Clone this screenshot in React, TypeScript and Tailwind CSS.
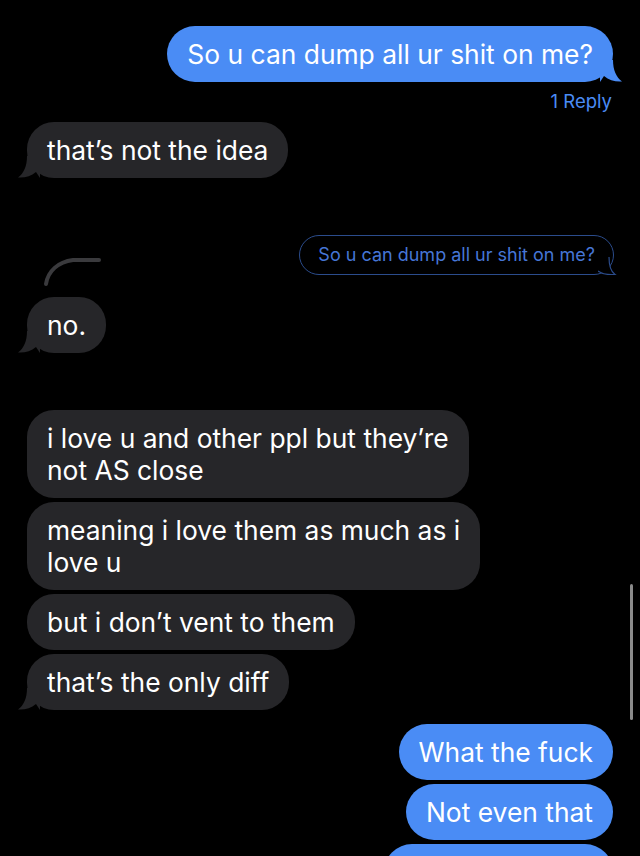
import React from 'react';

const font = { fontFamily: 'Inter, "Noto Sans", sans-serif' };

const LeftTail = () => (
  <svg className="absolute -left-[9px] bottom-0" width="22" height="22" viewBox="0 0 22 22">
    <path d="M9 0 C9 10 6 17 0 21.5 C7 22 13 20 18 16 L22 22 L22 0 Z" fill="#262629" />
  </svg>
);

const RightTail = ({ color, outline }: { color: string; outline?: boolean }) =>
  outline ? (
    <svg className="absolute -right-[7px] -bottom-[1px]" width="22" height="22" viewBox="0 0 22 22">
      <path d="M0 18 C4 21 10 22 17 21.5 C12 18 11 12 11 4" fill="black" stroke={color} strokeWidth="1.2" />
    </svg>
  ) : (
    <svg className="absolute -right-[9px] bottom-0" width="22" height="22" viewBox="0 0 22 22">
      <path d="M13 0 C13 10 16 17 22 21.5 C15 22 9 20 4 16 L0 22 L0 0 Z" fill={color} />
    </svg>
  );

const Gray = ({ children, tail, className = '' }: { children: React.ReactNode; tail?: boolean; className?: string }) => (
  <div className={`relative self-start whitespace-nowrap rounded-[27px] bg-[#262629] px-[20px] py-[12px] text-[26.4px] leading-[32px] text-white ${className}`}>
    {tail && <LeftTail />}
    <span className="relative">{children}</span>
  </div>
);

const Blue = ({ children, tail, className = '' }: { children: React.ReactNode; tail?: boolean; className?: string }) => (
  <div className={`relative self-end whitespace-nowrap rounded-[28px] bg-[#4a8cf5] px-[20px] py-[12px] text-[26.4px] leading-[32px] text-white ${className}`}>
    {tail && <RightTail color="#4a8cf5" />}
    <span className="relative">{children}</span>
  </div>
);

export default function App() {
  return (
    <div className="relative h-[856px] w-[640px] overflow-hidden bg-black" style={font}>
      <div className="flex flex-col px-[27px]">
        <Blue tail className="mt-[26px]">So u can dump all ur shit on me?</Blue>
        <div className="mt-[8px] mr-[1px] self-end text-[18.5px] leading-[22px] text-[#4a8cf5]">1 Reply</div>
        <Gray tail className="mt-[10px]">that’s not the idea</Gray>

        <div className="relative mt-[57px] flex flex-col">
          <div className="relative self-end mr-[-1px] rounded-[21px] border border-[#2b4c8c] px-[18px] py-[8px] text-[18px] leading-[22px] text-[#4676d6]">
            <RightTail color="#2b4c8c" outline />
            <span className="relative">So u can dump all ur shit on me?</span>
          </div>
          <svg className="absolute left-[16px] top-[20px]" width="60" height="32" viewBox="0 0 60 32">
            <path d="M3 29 C5 16 15 7 30 5 L56 5" fill="none" stroke="#3a3a3d" strokeWidth="4" strokeLinecap="round" />
          </svg>
          <Gray tail className="mt-[22px]">no.</Gray>
        </div>

        <Gray className="mt-[57px]">
          i love u and other ppl but they’re
          <br />
          not AS close
        </Gray>
        <Gray className="mt-[4px]">
          meaning i love them as much as i
          <br />
          love u
        </Gray>
        <Gray className="mt-[4px]">but i don’t vent to them</Gray>
        <Gray tail className="mt-[4px]">that’s the only diff</Gray>

        <Blue className="mt-[14px]">What the fuck</Blue>
        <Blue className="mt-[4px]">Not even that</Blue>
        <Blue className="mt-[4px] w-[229px]">&nbsp;</Blue>
      </div>
      <div className="absolute left-[630px] top-[584px] h-[136px] w-[3px] rounded-full bg-[#8a8a8a]" />
    </div>
  );
}
